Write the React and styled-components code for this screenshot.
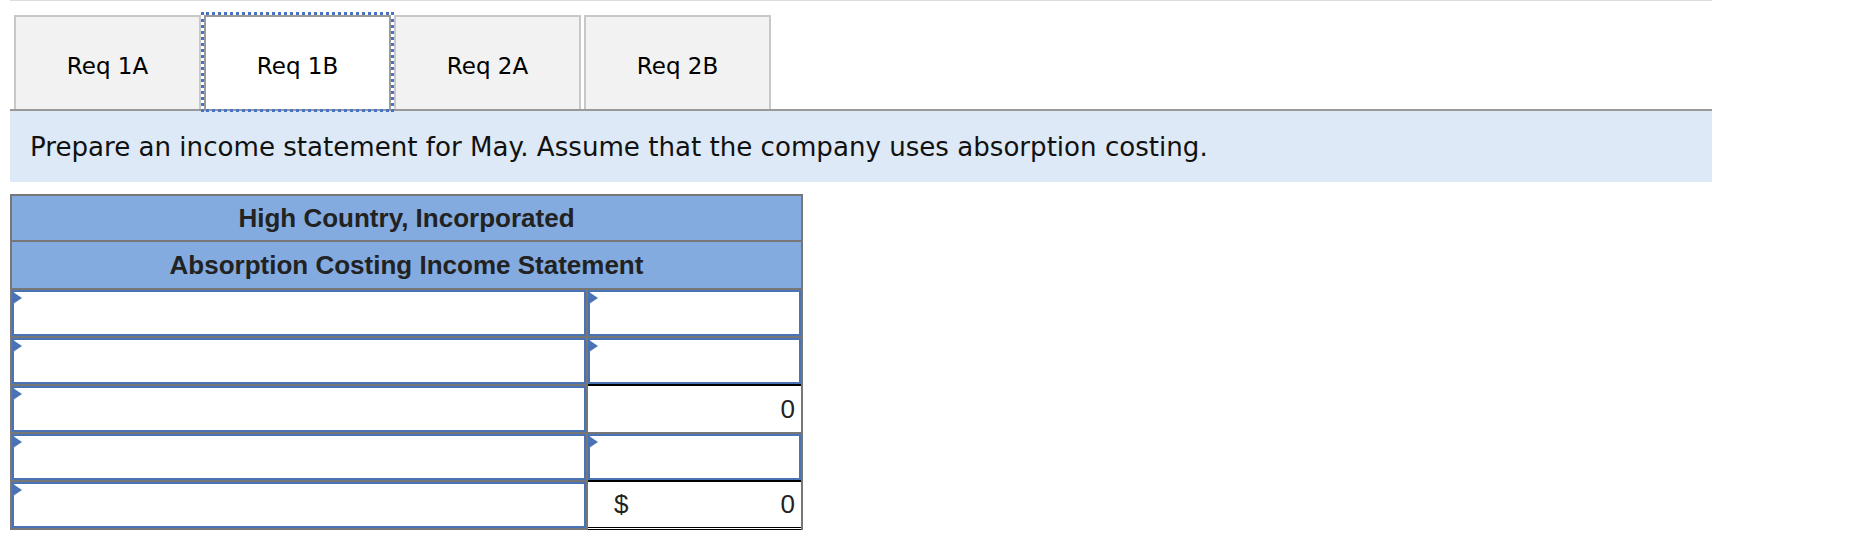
import React from 'react';
import styled, { createGlobalStyle } from 'styled-components';

const tabs = ['Req 1A', 'Req 1B', 'Req 2A', 'Req 2B'];

const rows = [
  { kind: 'input' },
  { kind: 'input' },
  { kind: 'subtotal', value: '0' },
  { kind: 'input' },
  { kind: 'total', value: '0' },
];

const App = () => {
  const activeTab = 'Req 1B';

  return (
    <>
      <GlobalStyle />
      <StyledPage>
        <StyledTopRule />
        <StyledTabBar>
          {tabs.map((tab) => (
            <StyledTab key={tab} $active={tab === activeTab}>
              {tab}
            </StyledTab>
          ))}
        </StyledTabBar>

        <StyledPrompt>
          Prepare an income statement for May. Assume that the company uses absorption costing.
        </StyledPrompt>

        <StyledStatement>
          <StyledTitleCell>High Country, Incorporated</StyledTitleCell>
          <StyledTitleCell>Absorption Costing Income Statement</StyledTitleCell>

          {rows.map((row, i) => (
            <React.Fragment key={i}>
              <StyledInputCell>
                <StyledField type="text" />
              </StyledInputCell>
              {row.kind === 'input' ? (
                <StyledInputCell>
                  <StyledField type="text" $align="right" />
                </StyledInputCell>
              ) : (
                <StyledAmountCell $total={row.kind === 'total'}>
                  {row.kind === 'total' && <span>$</span>}
                  <StyledAmount>{row.value}</StyledAmount>
                </StyledAmountCell>
              )}
            </React.Fragment>
          ))}
        </StyledStatement>
      </StyledPage>
    </>
  );
};

const GlobalStyle = createGlobalStyle`
  body {
    margin: 0;
    background: #fff;
  }
`;

const StyledPage = styled.div`
  width: 1702px;
  padding-left: 10px;
`;

const StyledTopRule = styled.div`
  height: 1px;
  background-color: #dcdcdc;
`;

const StyledTabBar = styled.div`
  display: flex;
  gap: 3px;
  padding: 14px 0 0 4px;
  border-bottom: 2px solid #999;
`;

const StyledTab = styled.button`
  width: 187px;
  height: 94px;
  box-sizing: border-box;
  margin: 0;
  padding: 5px 0 0;
  border: 2px solid ${({ $active }) => ($active ? '#9a9a9a' : '#c8c8c8')};
  border-bottom: none;
  background-color: ${({ $active }) => ($active ? '#fff' : '#f2f2f2')};
  color: #000;
  font: 23px 'DejaVu Sans', Verdana, sans-serif;
  cursor: pointer;
  outline: ${({ $active }) => ($active ? '3px dotted #4a74c2' : 'none')};
  outline-offset: 0;
`;

const StyledPrompt = styled.p`
  margin: 0;
  padding: 1px 0 0 20px;
  line-height: 70px;
  background-color: #dde9f6;
  color: #111;
  font-size: 26.1px;
  font-family: 'DejaVu Sans', Verdana, sans-serif;
`;

const StyledStatement = styled.div`
  display: grid;
  grid-template-columns: 574px 213px;
  grid-template-rows: 44px 46px repeat(5, 46px);
  gap: 2px;
  width: fit-content;
  margin-top: 12px;
  border: 2px solid #777;
  background-color: #777;
  font-family: 'Liberation Sans', Arial, sans-serif;
  font-size: 26px;
  color: #222;
`;

const StyledTitleCell = styled.div`
  grid-column: 1 / -1;
  display: flex;
  align-items: center;
  justify-content: center;
  background-color: #83abdf;
  font-weight: bold;
`;

const StyledInputCell = styled.div`
  position: relative;
  background-color: #fff;

  &::before {
    content: '';
    position: absolute;
    top: 2px;
    left: 1px;
    border-style: solid;
    border-width: 6.5px 0 6.5px 9px;
    border-color: transparent transparent transparent #4a73b5;
  }
`;

const StyledField = styled.input`
  display: block;
  width: 100%;
  height: 100%;
  box-sizing: border-box;
  margin: 0;
  padding: 0 8px;
  border: 2px solid #4a73b5;
  background: transparent;
  font: 26px 'Liberation Sans', Arial, sans-serif;
  text-align: ${({ $align }) => $align || 'left'};
  outline: none;
`;

const StyledAmountCell = styled.div`
  display: flex;
  align-items: center;
  justify-content: space-between;
  padding: 0 6px 0 26px;
  background-color: #fff;
  box-sizing: border-box;
  border-bottom: ${({ $total }) => ($total ? '1px solid #000' : 'none')};
  box-shadow: ${({ $total }) =>
    $total
      ? '0 1px 0 #fff, 0 3px 0 #000, 0 -2px 0 #000'
      : '0 -2px 0 #000'};
`;

const StyledAmount = styled.span`
  margin-left: auto;
`;

export default App;
